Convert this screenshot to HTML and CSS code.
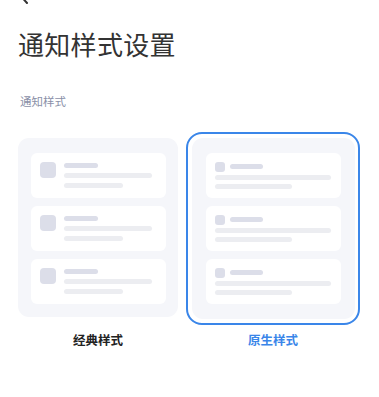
FILE: index.html
```html
<!DOCTYPE html>
<html lang="zh">
<head>
<meta charset="utf-8">
<link rel="stylesheet" href="styles.css">
</head>
<body>
<div class="topbar">
  <svg class="back" width="12" height="20" viewBox="0 0 12 20"><path d="M10 1 L2 10 L10 19" fill="none" stroke="#333" stroke-width="2" stroke-linecap="round" stroke-linejoin="round"/></svg>
</div>
<h1 class="title">通知样式设置</h1>
<div class="section">通知样式</div>
<div class="options">
  <div class="card classic">
    <div class="item"><div class="icon"></div><div class="lines"><div class="l l1"></div><div class="l l2"></div><div class="l l3"></div></div></div>
    <div class="item"><div class="icon"></div><div class="lines"><div class="l l1"></div><div class="l l2"></div><div class="l l3"></div></div></div>
    <div class="item"><div class="icon"></div><div class="lines"><div class="l l1"></div><div class="l l2"></div><div class="l l3"></div></div></div>
  </div>
  <div class="selected">
    <div class="card native">
      <div class="item"><div class="head"><div class="dot"></div><div class="l n1"></div></div><div class="l n2"></div><div class="l n3"></div></div>
      <div class="item"><div class="head"><div class="dot"></div><div class="l n1"></div></div><div class="l n2"></div><div class="l n3"></div></div>
      <div class="item"><div class="head"><div class="dot"></div><div class="l n1"></div></div><div class="l n2"></div><div class="l n3"></div></div>
    </div>
  </div>
  <div class="label">经典样式</div>
  <div class="label active">原生样式</div>
</div>
</body>
</html>
```
FILE: styles.css
```css
* { box-sizing: border-box; }
body {
  margin: 0;
  background: #fff;
  font-family: "Noto Sans CJK SC", "Noto Sans", sans-serif;
  width: 379px;
  height: 397px;
  overflow: hidden;
}
.topbar {
  height: 4px;
  overflow: hidden;
  position: relative;
}
.back {
  position: absolute;
  left: 17px;
  top: -16px;
}
.title {
  margin: 24px 0 0 18px;
  font-size: 26px;
  font-weight: 400;
  line-height: 31px;
  color: #333;
  letter-spacing: 0.3px;
}
.section {
  margin: 34px 0 0 20px;
  font-size: 11.5px;
  line-height: 16px;
  color: #8a90a8;
}
.options {
  display: grid;
  grid-template-columns: 160px 174px;
  column-gap: 8px;
  padding-left: 18px;
  margin-top: 23px;
  align-items: start;
}
.card {
  background: #f5f6fa;
  border-radius: 11px;
  display: flex;
  flex-direction: column;
  gap: 8px;
}
.classic {
  margin-top: 6px;
  height: 179px;
  padding: 15px 12px 0 13px;
}
.selected {
  width: 174px;
  height: 193px;
  border: 2.5px solid #3a86e9;
  border-radius: 16px;
  padding: 3.5px;
}
.native {
  height: 181px;
  padding: 15px 14px 0 14px;
}
.item {
  background: #fff;
  border-radius: 6px;
  height: 45px;
  padding: 9px;
}
.classic .item {
  display: flex;
  gap: 8px;
}
.icon {
  width: 16px;
  height: 16px;
  border-radius: 4px;
  background: #dcdee9;
  flex: none;
}
.lines {
  display: flex;
  flex-direction: column;
  padding-top: 1px;
}
.l {
  height: 5px;
  border-radius: 3px;
  background: #ecedf1;
}
.l1 { width: 34px; background: #dcdee9; }
.l2 { width: 88px; margin-top: 5px; }
.l3 { width: 59px; margin-top: 5px; }
.head {
  display: flex;
  align-items: center;
  gap: 5px;
  height: 10px;
}
.dot {
  width: 10px;
  height: 10px;
  border-radius: 3px;
  background: #dcdee9;
}
.n1 { width: 33px; background: #dcdee9; }
.n2 { width: 116px; margin-top: 3px; }
.n3 { width: 77px; margin-top: 4px; }
.label {
  margin-top: 6px;
  text-align: center;
  font-size: 12.5px;
  line-height: 18px;
  font-weight: 700;
  color: #222;
}
.label.active { color: #3a86e9; }
```
